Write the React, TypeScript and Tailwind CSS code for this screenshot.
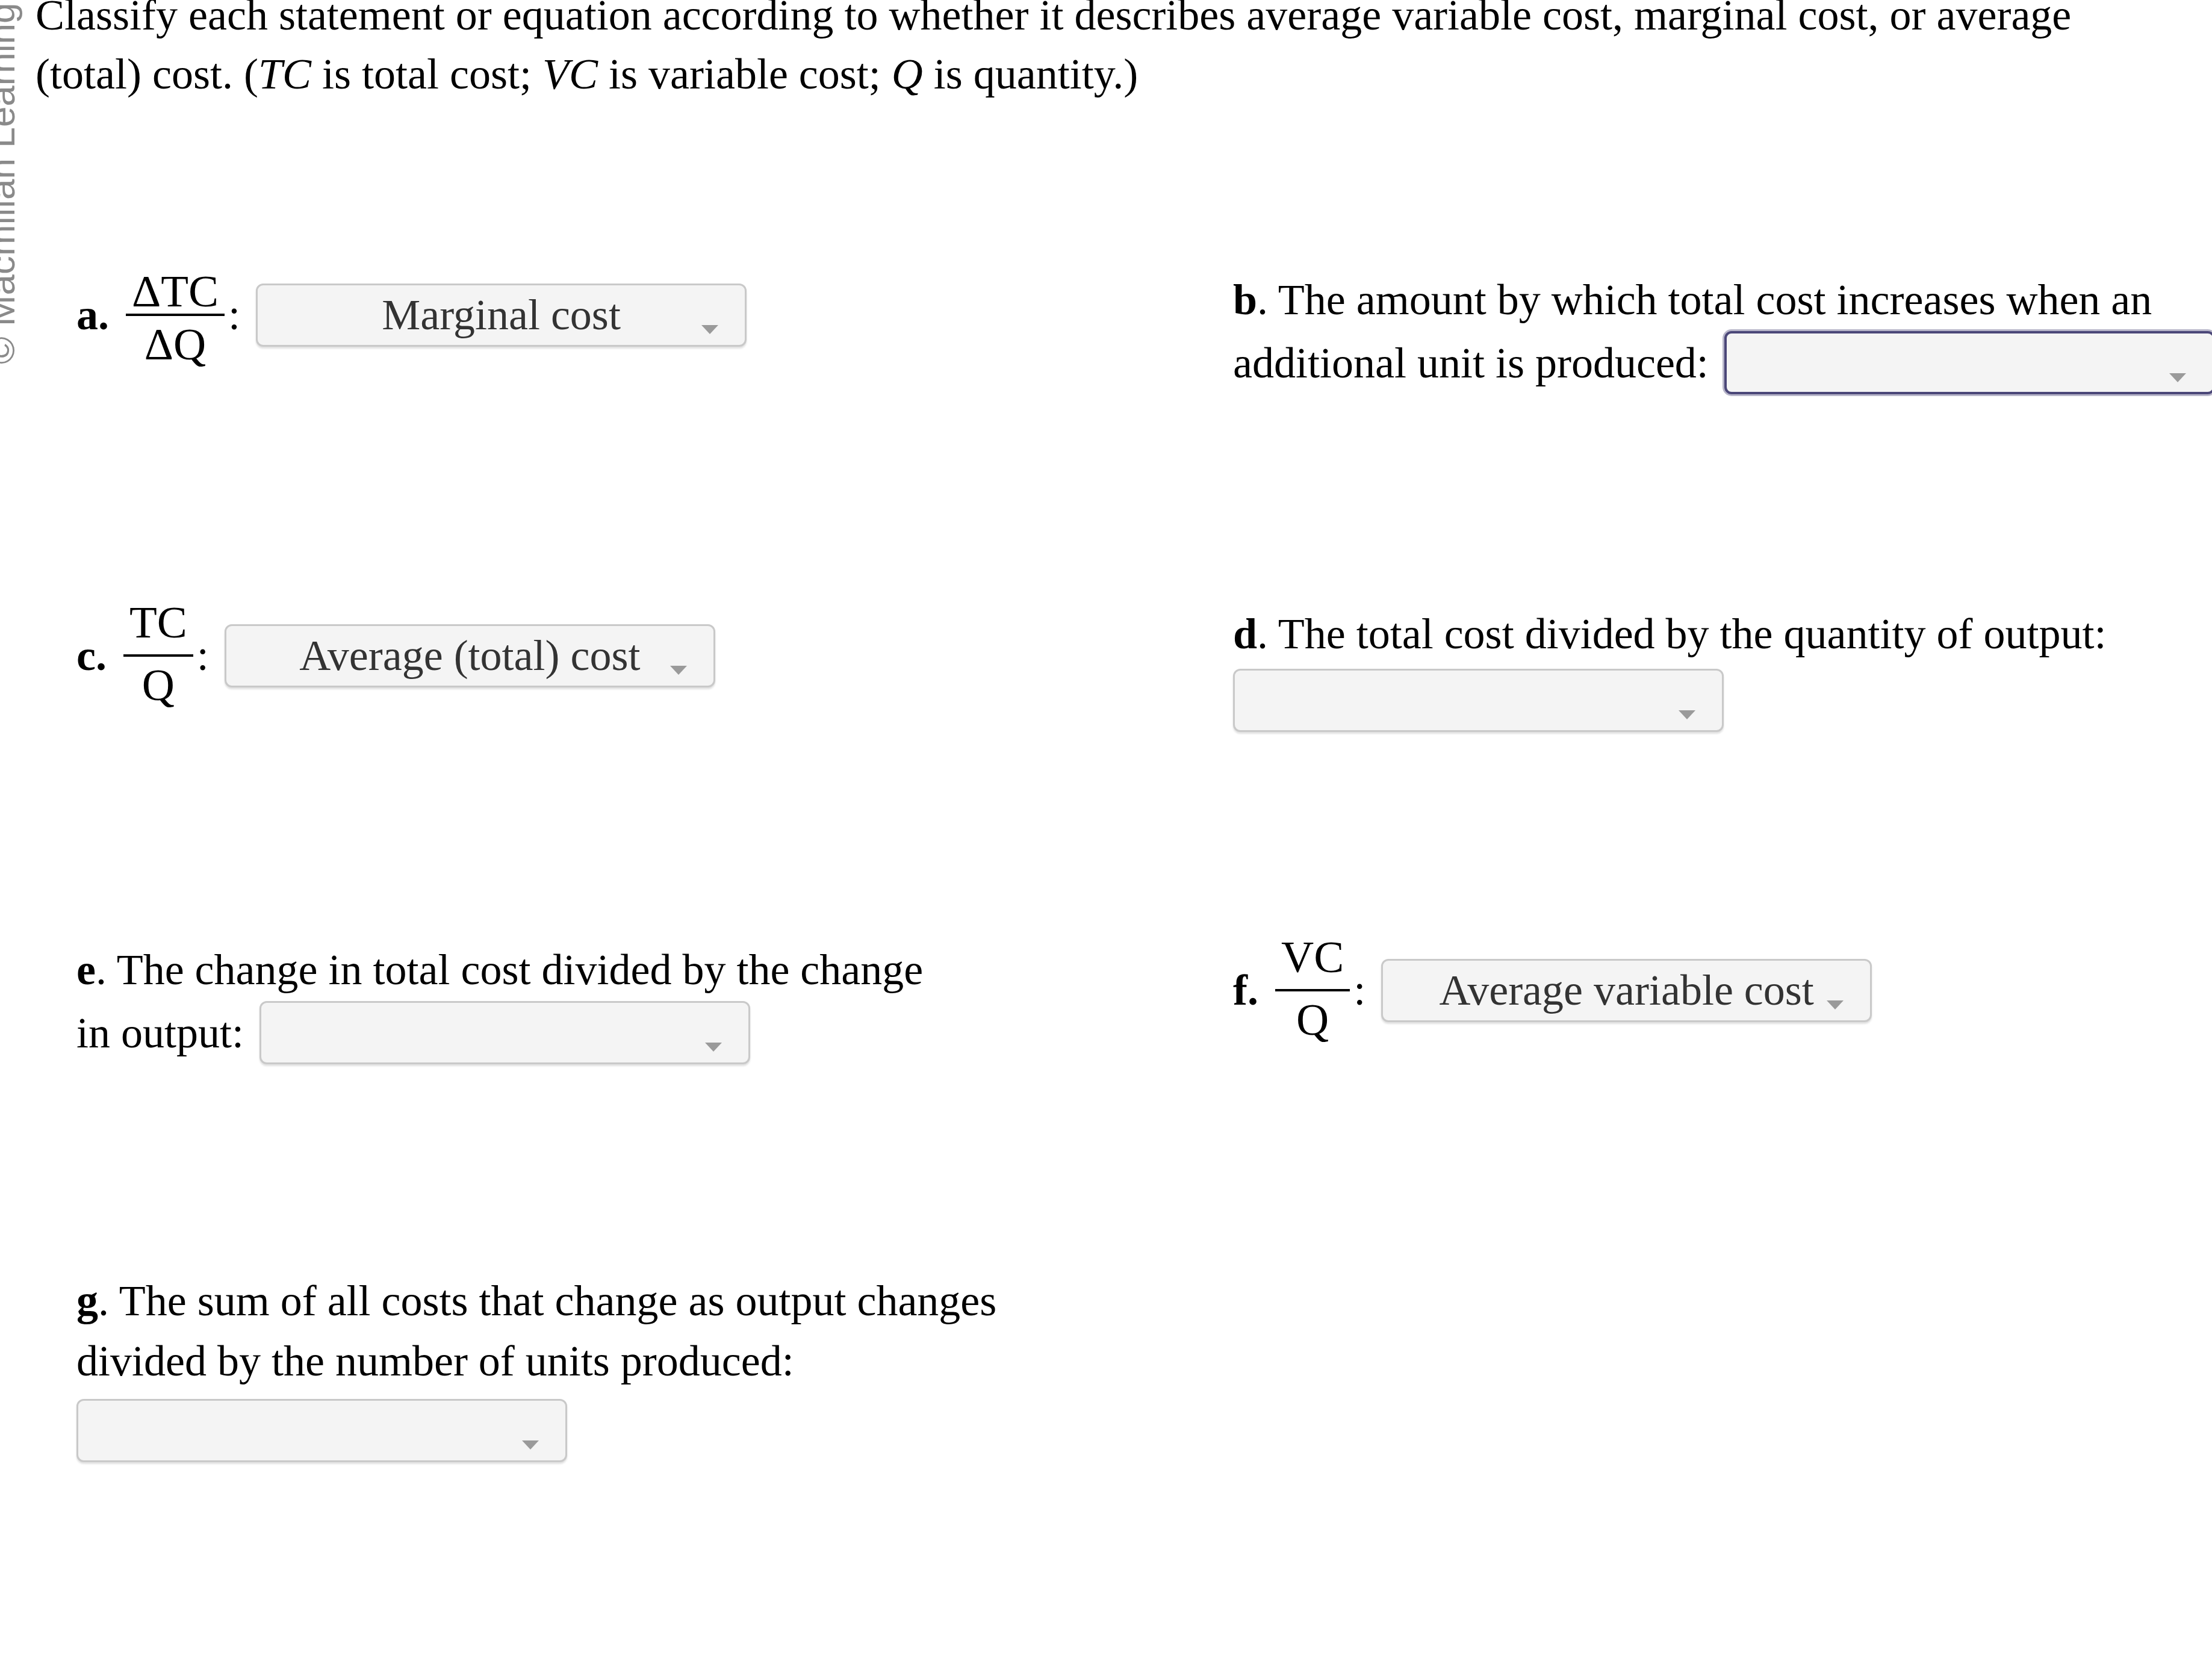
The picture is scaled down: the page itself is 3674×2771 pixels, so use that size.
import type { ReactNode } from "react";

const SELECT_BASE =
  "relative flex h-[105px] w-[815px] shrink-0 items-center justify-center rounded-[12px] bg-[#f4f4f4] text-[72px] leading-none text-[#333]";
const SELECT_IDLE = "border-[3px] border-[#c9c9c9] shadow-[0_3px_3px_rgba(0,0,0,0.12)]";
const SELECT_FOCUS = "border-[4px] border-[#4b4778] shadow-[0_0_0_3px_rgba(75,71,120,0.4)]";

function Dropdown({ value, focused = false, className = "" }: { value?: string; focused?: boolean; className?: string }) {
  return (
    <div className={`${SELECT_BASE} ${focused ? SELECT_FOCUS : SELECT_IDLE} ${className}`}>
      {value}
      <svg className="absolute right-[44px] top-[66px]" width="28" height="15" viewBox="0 0 28 15">
        <polygon points="0,0 28,0 14,15" fill="#9a9a9a" />
      </svg>
    </div>
  );
}

// stacked fraction, bar kept at the vertical middle so items-center lines it up
function Frac({ top, bottom, tall = false }: { top: ReactNode; bottom: ReactNode; tall?: boolean }) {
  return (
    <span className="ml-[28px] inline-flex flex-col text-[75px] leading-none">
      <span className={`px-[10px] pt-[9px] text-center ${tall ? "" : "-mt-[16px] pb-[16px]"}`}>{top}</span>
      <span className="h-[4px] bg-black" />
      <span className="mt-[9px] px-[10px] text-center">{bottom}</span>
    </span>
  );
}

function Line({ children, h = "h-[105px]" }: { children: ReactNode; h?: string }) {
  return <div className={`flex items-center whitespace-nowrap ${h}`}>{children}</div>;
}

function FracItem({
  label,
  top,
  bottom,
  value,
  tall,
}: {
  label: string;
  top: ReactNode;
  bottom: ReactNode;
  value?: string;
  tall?: boolean;
}) {
  return (
    <div className="flex h-[166px] items-center text-[72px] leading-none">
      <b>{label}</b>
      <Frac top={top} bottom={bottom} tall={tall} />
      <span className="ml-[6px]">:</span>
      <Dropdown value={value} className="ml-[26px]" />
    </div>
  );
}

export default function App() {
  return (
    <div className="relative min-h-screen w-full overflow-hidden bg-white font-['Liberation_Serif','Times_New_Roman',serif] text-black">
      <span className="absolute left-[-28px] top-[605px] origin-top-left -rotate-90 whitespace-nowrap font-['Liberation_Sans',Arial,sans-serif] text-[62px] leading-none text-[#8a8a8a]">
        © Macmillan Learning
      </span>

      <p className="-mt-[24px] pl-[59px] text-[72px] leading-[98px]">
        Classify each statement or equation according to whether it describes average variable cost, marginal cost, or average
        <br />
        (total) cost. (<i>TC</i> is total cost; <i>VC</i> is variable cost; <i>Q</i> is quantity.)
      </p>

      <div className="mt-[268px] grid grid-cols-[1921px_1fr] grid-rows-[560px_555px_556px_auto] pl-[127px] text-[72px] leading-none">
        <div>
          <FracItem label="a." top="ΔTC" bottom="ΔQ" value="Marginal cost" tall />
        </div>
        <div className="pt-[5px]">
          <Line>
            <b>b</b>. The amount by which total cost increases when an
          </Line>
          <Line>
            additional unit is produced:
            <Dropdown focused className="ml-[26px]" />
          </Line>
        </div>

        <div className="pt-[6px]">
          <FracItem label="c." top="TC" bottom="Q" value="Average (total) cost" />
        </div>
        <div>
          <Line>
            <b>d</b>. The total cost divided by the quantity of output:
          </Line>
          <Dropdown className="mt-[6px]" />
        </div>

        <div className="pt-[3px]">
          <Line>
            <b>e</b>. The change in total cost divided by the change
          </Line>
          <Line>
            in output:
            <Dropdown className="ml-[26px]" />
          </Line>
        </div>
        <div className="pt-[7px]">
          <FracItem label="f." top="VC" bottom="Q" value="Average variable cost" />
        </div>

        <div>
          <Line h="h-[100px]">
            <b>g</b>. The sum of all costs that change as output changes
          </Line>
          <Line h="h-[100px]">divided by the number of units produced:</Line>
          <Dropdown className="mt-[13px]" />
        </div>
        <div />
      </div>
    </div>
  );
}
